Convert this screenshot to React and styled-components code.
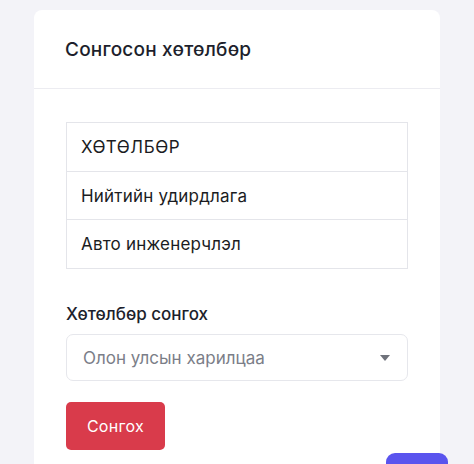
import React from "react";
import styled, { createGlobalStyle } from "styled-components";

const GlobalStyle = createGlobalStyle`
  html, body {
    margin: 0;
    padding: 0;
    background: #f3f3f8;
    font-family: "Inter", "Noto Sans", sans-serif;
    overflow: hidden;
  }
  * { box-sizing: border-box; }
`;

const Page = styled.div`
  position: relative;
  width: 474px;
  height: 464px;
  padding: 10px 34px 0 34px;
  overflow: hidden;
`;

const Card = styled.div`
  background: #fff;
  border-radius: 8px 8px 0 0;
  height: 454px;
  display: flex;
  flex-direction: column;
`;

const CardHeader = styled.div`
  height: 79px;
  display: flex;
  align-items: center;
  padding: 0 31px;
  border-bottom: 1px solid #ececf1;
  h3 {
    margin: 0;
    font-size: 19px;
    font-weight: 500;
    color: #1d1f2c;
    letter-spacing: 0.2px;
  }
`;

const CardBody = styled.div`
  padding: 33px 32px 0 32px;
  display: flex;
  flex-direction: column;
`;

const Table = styled.div`
  border: 1px solid #e4e5ea;
  display: flex;
  flex-direction: column;
`;

const Row = styled.div`
  height: ${(p) => (p.$last ? "49px" : "48px")};
  display: flex;
  align-items: center;
  padding: 0 14px;
  font-size: 17px;
  color: #1b1c22;
  border-top: ${(p) => (p.$first ? "none" : "1px solid #e4e5ea")};
  letter-spacing: ${(p) => (p.$caps ? "0.6px" : "0.2px")};
`;

const Label = styled.div`
  margin-top: 34px;
  font-size: 17px;
  font-weight: 500;
  color: #1d1f2c;
  line-height: 22px;
`;

const Select = styled.div`
  margin-top: 9px;
  height: 47px;
  border: 1px solid #e6e7ec;
  border-radius: 7px;
  display: flex;
  align-items: center;
  justify-content: space-between;
  padding: 0 17px 0 16px;
  font-size: 17px;
  color: #7b7e88;
`;

const Caret = styled.span`
  width: 0;
  height: 0;
  border-left: 5px solid transparent;
  border-right: 5px solid transparent;
  border-top: 6px solid #6f727b;
`;

const Button = styled.button`
  margin-top: 21px;
  width: 99px;
  height: 48px;
  border: none;
  border-radius: 5px;
  background: #d93b4b;
  color: #fff;
  font-family: inherit;
  font-size: 16px;
  letter-spacing: 0.3px;
  align-self: flex-start;
`;

const FloatButton = styled.div`
  position: absolute;
  left: 386px;
  top: 453px;
  width: 62px;
  height: 11px;
  border-radius: 9px 9px 0 0;
  background: #5a54ee;
`;

const programs = ["ХӨТӨЛБӨР", "Нийтийн удирдлага", "Авто инженерчлэл"];

export default function App() {
  return (
    <Page>
      <GlobalStyle />
      <Card>
        <CardHeader>
          <h3>Сонгосон хөтөлбөр</h3>
        </CardHeader>
        <CardBody>
          <Table>
            {programs.map((p, i) => (
              <Row key={p} $first={i === 0} $last={i === programs.length - 1} $caps={i === 0}>
                {p}
              </Row>
            ))}
          </Table>
          <Label>Хөтөлбөр сонгох</Label>
          <Select>
            <span>Олон улсын харилцаа</span>
            <Caret />
          </Select>
          <Button>Сонгох</Button>
        </CardBody>
      </Card>
      <FloatButton />
    </Page>
  );
}
